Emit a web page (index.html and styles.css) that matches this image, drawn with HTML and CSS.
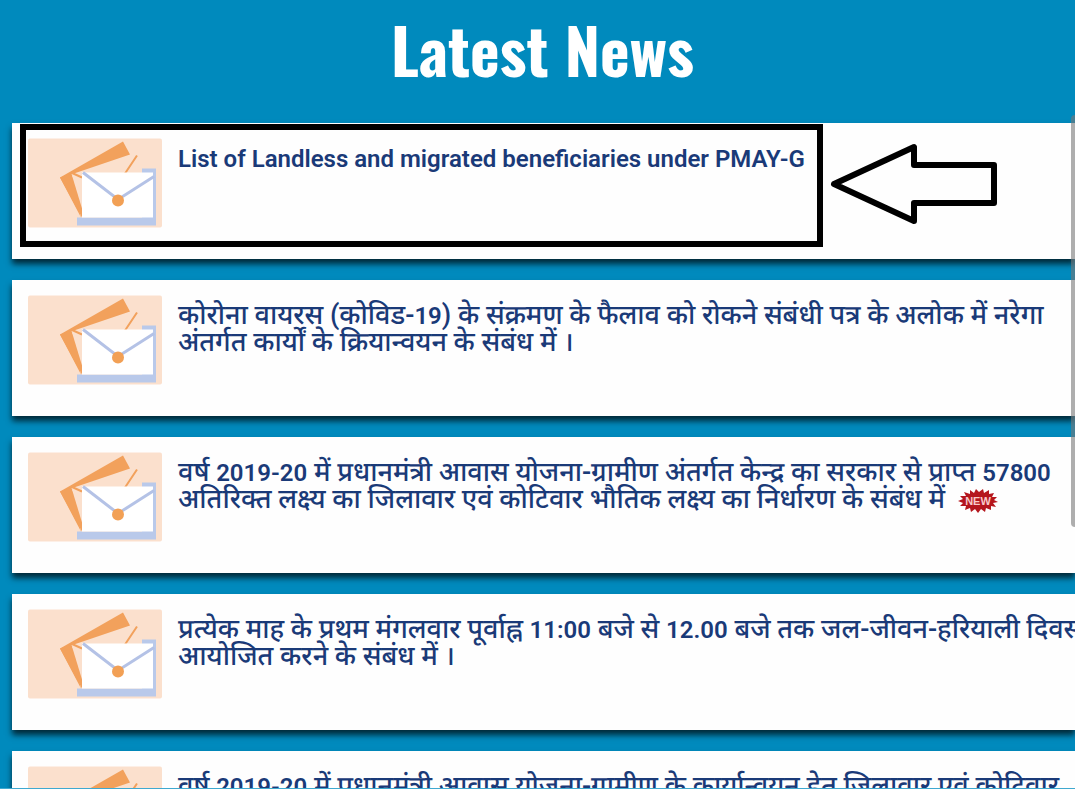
FILE: index.html
```
<!DOCTYPE html>
<html lang="hi">
<head>
<meta charset="UTF-8">
<meta name="viewport" content="width=device-width, initial-scale=1.0">
<title>Latest News</title>
<link rel="stylesheet" href="styles.css">
</head>
<body>

<!-- envelope drawing shared by all the news cards -->
<svg class="defs" width="0" height="0" aria-hidden="true">
  <symbol id="mail" viewBox="0 0 134 89">
    <rect width="134" height="89" rx="2" fill="#fbe0cd"/>
    <path d="M32 39 L95 3 L102 16 L43 36 L53 79 Z" fill="#f2a15c"/>
    <path d="M32 39 L43 35 L54 56 V79 Z" fill="#f2a15c"/>
    <path d="M44 37 L54 40 V70 Z" fill="#fbe0cd"/>
    <path d="M43 34 L54 39 M109 17 L97 35" stroke="#f2a15c" stroke-width="2" fill="none"/>
    <path d="M114 30 H128 V87 H49 V79 H114 Z" fill="#b9c9ea"/>
    <rect x="54" y="34" width="71" height="45" fill="#fff"/>
    <path d="M55 34 L90 61 L126 38" stroke="#b4c2e6" stroke-width="3" fill="none"/>
    <circle cx="90" cy="62" r="6" fill="#f2a055"/>
  </symbol>
</svg>

<main class="news">
  <h1>Latest News</h1>

  <div class="list">
    <article class="card">
      <svg class="icon" aria-hidden="true"><use href="#mail"/></svg>
      <p class="text"><span class="latin">List of Landless and migrated beneficiaries under PMAY-G</span></p>
      <div class="frame"></div>
      <svg class="arrow" viewBox="0 0 170 82" aria-hidden="true">
        <path d="M4 41 L84 4 V22 H164 V60 H84 V78 Z" fill="none" stroke="#000" stroke-width="6" stroke-linejoin="round"/>
      </svg>
    </article>

    <article class="card">
      <svg class="icon" aria-hidden="true"><use href="#mail"/></svg>
      <p class="text">कोरोना वायरस (कोविड-<span class="latin">19</span>) के संक्रमण के फैलाव को रोकने संबंधी पत्र के अलोक में नरेगा<br>अंतर्गत कार्यों के क्रियान्वयन के संबंध में ।</p>
    </article>

    <article class="card">
      <svg class="icon" aria-hidden="true"><use href="#mail"/></svg>
      <p class="text">वर्ष <span class="latin">2019-20</span> में प्रधानमंत्री आवास योजना-ग्रामीण अंतर्गत केन्द्र का सरकार से प्राप्त <span class="latin">57800</span><br>अतिरिक्त लक्ष्य का जिलावार एवं कोटिवार भौतिक लक्ष्य का निर्धारण के संबंध में
        <svg class="new" viewBox="0 0 40 26" role="img" aria-label="NEW">
          <path d="M0 13 L5 11 L2 8 L8 8 L6 4 L12 6 L12 2 L16 5 L18 1 L21 4 L25 1 L26 5 L31 2 L31 6 L36 5 L34 9 L39 9 L36 12 L40 14 L35 15 L38 19 L33 18 L33 22 L28 20 L27 24 L23 21 L20 25 L17 21 L13 24 L12 20 L7 22 L8 18 L2 18 L5 15 Z" fill="#b5161d"/>
          <text x="20" y="17" text-anchor="middle">NEW</text>
        </svg>
      </p>
    </article>

    <article class="card">
      <svg class="icon" aria-hidden="true"><use href="#mail"/></svg>
      <p class="text">प्रत्येक माह के प्रथम मंगलवार पूर्वाह्न <span class="latin">11:00</span> बजे से <span class="latin">12.00</span> बजे तक जल-जीवन-हरियाली दिवस<br>आयोजित करने के संबंध में ।</p>
    </article>

    <article class="card">
      <svg class="icon" aria-hidden="true"><use href="#mail"/></svg>
      <p class="text">वर्ष <span class="latin">2019-20</span> में प्रधानमंत्री आवास योजना-ग्रामीण के कार्यान्वयन हेतु जिलावार एवं कोटिवार</p>
    </article>
  </div>

  <div class="scrollbar"></div>
</main>

</body>
</html>
```
FILE: styles.css
```
* {
  box-sizing: border-box;
}

body {
  margin: 0;
  background: #008abd;
  font-family: Roboto, "Noto Sans Devanagari", "Noto Sans", sans-serif;
}

.defs {
  position: absolute;
}

.news {
  position: relative;
  height: 100vh;
  overflow: hidden;
  border-bottom: 1px solid #3fa9d0;
}

h1 {
  margin: 0;
  padding: 1px 0 26px 10px;
  text-align: center;
  font: bold 63px/96px Oswald, "Liberation Sans Narrow", sans-serif;
  color: #fff;
}

.list {
  display: flex;
  flex-direction: column;
  gap: 21px;
  padding-left: 12px;
}

.card {
  position: relative;
  display: flex;
  gap: 16px;
  min-height: 136px;
  padding: 15px 0 15px 16px;
  background: #fefefe;
  box-shadow: 0 5px 6px rgba(0, 0, 0, 0.7);
}

.icon {
  flex: none;
  width: 134px;
  height: 90px;
}

.text {
  margin: 0;
  padding-top: 7px;
  font-size: 27px;
  font-weight: 500;
  line-height: 26px;
  color: #1a3a78;
  white-space: nowrap;
}

.latin {
  font-size: 24px;
  font-weight: 600;
}

/* box and arrow drawn over the first item */
.frame {
  position: absolute;
  top: 1px;
  left: 8px;
  width: 803px;
  height: 123px;
  border: 6px solid #000;
}

.arrow {
  position: absolute;
  top: 20px;
  left: 818px;
  width: 170px;
  height: 82px;
}

.new {
  width: 40px;
  height: 26px;
  margin-left: 6px;
  vertical-align: middle;
}

.new text {
  font: bold 11px "Liberation Sans", sans-serif;
  fill: #f8c9c9;
}

.scrollbar {
  position: absolute;
  top: 115px;
  right: 0;
  width: 4px;
  height: 412px;
  border-radius: 4px 0 0 4px;
  background: rgba(120, 120, 120, 0.6);
}
```
